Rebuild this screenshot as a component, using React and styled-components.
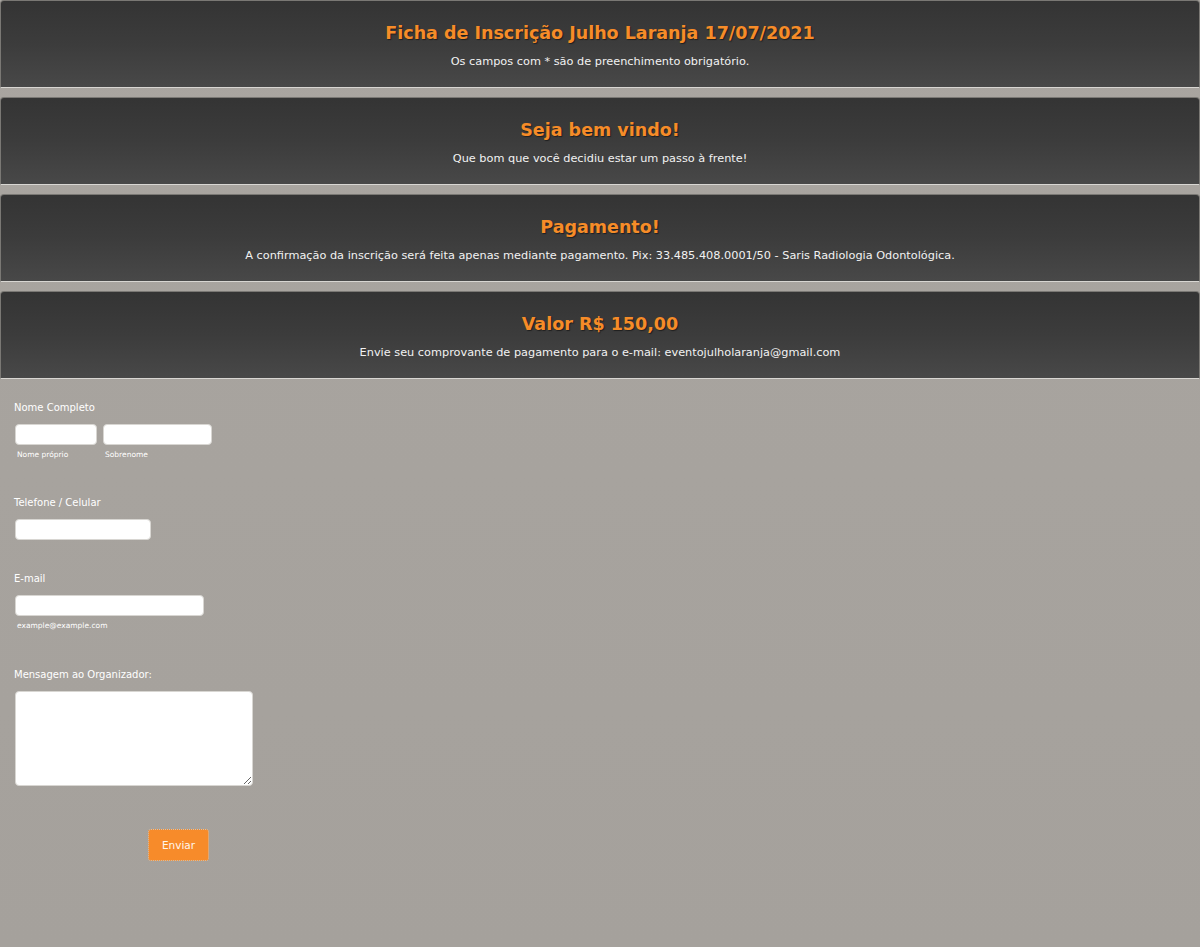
import React, { useState } from "react";
import styled, { createGlobalStyle } from "styled-components";

const GlobalStyle = createGlobalStyle`
  html, body {
    margin: 0;
    padding: 0;
    background: #a8a49f;
    font-family: "DejaVu Sans", Verdana, sans-serif;
  }
`;

const Page = styled.div`
  min-height: 947px;
  background: linear-gradient(180deg, #a9a5a0 0%, #a5a19c 100%);
`;

const Panel = styled.div`
  height: 84px;
  margin-bottom: 9px;
  border: 1px solid #7a7874;
  border-bottom: 1px solid #d8d6d2;
  border-radius: 4px 4px 0 0;
  background: linear-gradient(180deg, #343434 0%, #3c3c3c 50%, #484848 100%);
  display: flex;
  flex-direction: column;
  align-items: center;
  justify-content: center;
  gap: 12px;
  padding-top: 2px;
  box-sizing: content-box;
`;

const PanelTitle = styled.h1`
  margin: 0;
  font-size: 17.5px;
  font-weight: bold;
  color: #f68c28;
  text-shadow: 1px 1px 1px #1f1f1f;
`;

const PanelText = styled.p`
  margin: 0;
  font-size: 11.3px;
  color: #f2f2f2;
`;

const Form = styled.form`
  padding: 14px 14px 0;
  display: flex;
  flex-direction: column;
`;

const Field = styled.div`
  display: flex;
  flex-direction: column;
  margin-bottom: ${(p) => p.$space || 40}px;
`;

const Label = styled.label`
  font-size: 10px;
  color: #ffffff;
  margin-bottom: 11px;
`;

const Row = styled.div`
  display: flex;
  gap: 5px;
`;

const Group = styled.div`
  display: flex;
  flex-direction: column;
`;

const Input = styled.input`
  width: ${(p) => p.$w}px;
  height: 21px;
  box-sizing: border-box;
  margin-left: 1px;
  border: 1px solid #d8d6d2;
  border-radius: 4px;
  background: #ffffff;
  outline: none;
`;

const Hint = styled.span`
  font-size: 7.5px;
  color: #ffffff;
  margin: 5px 0 0 3px;
`;

const TextArea = styled.textarea`
  width: 238px;
  height: 95px;
  box-sizing: border-box;
  margin-left: 1px;
  border: 1px solid #d8d6d2;
  border-radius: 4px;
  background: #ffffff;
  outline: none;
`;

const Actions = styled.div`
  display: flex;
  padding-left: 134px;
`;

const Button = styled.button`
  width: 61px;
  height: 32px;
  background: #f78b2a;
  border: 1px dotted #c8c4bd;
  border-radius: 3px;
  color: #fff6ec;
  font-family: "DejaVu Sans", Verdana, sans-serif;
  font-size: 10.5px;
  cursor: pointer;
`;

const panels = [
  {
    title: "Ficha de Inscrição Julho Laranja 17/07/2021",
    text: "Os campos com * são de preenchimento obrigatório.",
  },
  {
    title: "Seja bem vindo!",
    text: "Que bom que você decidiu estar um passo à frente!",
  },
  {
    title: "Pagamento!",
    text: "A confirmação da inscrição será feita apenas mediante pagamento. Pix: 33.485.408.0001/50 - Saris Radiologia Odontológica.",
  },
  {
    title: "Valor R$ 150,00",
    text: "Envie seu comprovante de pagamento para o e-mail: eventojulholaranja@gmail.com",
  },
];

function App() {
  const [form, setForm] = useState({
    first: "",
    last: "",
    phone: "",
    email: "",
    message: "",
  });

  const onChange = (e) => {
    const { name, value } = e.target;
    setForm({ ...form, [name]: value });
  };

  return (
    <Page>
      <GlobalStyle />
      {panels.map((p) => (
        <Panel key={p.title}>
          <PanelTitle>{p.title}</PanelTitle>
          <PanelText>{p.text}</PanelText>
        </Panel>
      ))}
      <Form onSubmit={(e) => e.preventDefault()}>
        <Field $space={38}>
          <Label>Nome Completo</Label>
          <Row>
            <Group>
              <Input name="first" $w={82} value={form.first} onChange={onChange} />
              <Hint>Nome próprio</Hint>
            </Group>
            <Group>
              <Input name="last" $w={109} value={form.last} onChange={onChange} />
              <Hint>Sobrenome</Hint>
            </Group>
          </Row>
        </Field>
        <Field $space={33}>
          <Label>Telefone / Celular</Label>
          <Input name="phone" $w={136} value={form.phone} onChange={onChange} />
        </Field>
        <Field $space={39}>
          <Label>E-mail</Label>
          <Input name="email" $w={189} value={form.email} onChange={onChange} />
          <Hint>example@example.com</Hint>
        </Field>
        <Field $space={43}>
          <Label>Mensagem ao Organizador:</Label>
          <TextArea name="message" value={form.message} onChange={onChange} />
        </Field>
        <Actions>
          <Button type="submit">Enviar</Button>
        </Actions>
      </Form>
    </Page>
  );
}

export default App;
